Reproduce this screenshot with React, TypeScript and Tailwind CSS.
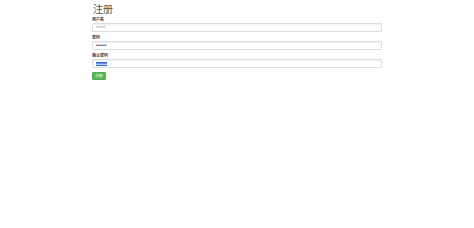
export default function App() {
  return (
    <div className="w-[474px] h-[228px] bg-white" style={{ fontFamily: '"Liberation Sans", "Noto Sans CJK SC", sans-serif' }}>
      <div className="ml-[92px] w-[290px] pt-[5px] flex flex-col">
        <h1 className="text-[10px] leading-[10px] h-[12px] text-[#555] font-normal pl-[1px]">注册</h1>
        <label className="text-[4px] leading-[5px] font-bold text-[#444]">用户名</label>
        <div className="mt-[1px] h-[9px] border border-[#ddd] shadow-[inset_0_1px_1px_rgba(0,0,0,0.06)] rounded-[1px] px-[3px] flex items-center text-[3.5px] text-[#999]">test01</div>
        <label className="mt-[3px] text-[4px] leading-[5px] font-bold text-[#444]">密码</label>
        <div className="mt-[1px] h-[9px] border border-[#ddd] shadow-[inset_0_1px_1px_rgba(0,0,0,0.06)] rounded-[1px] px-[3px] flex items-center text-[5px] text-[#444]">••••••</div>
        <label className="mt-[3px] text-[4px] leading-[5px] font-bold text-[#444]">确认密码<span className="font-normal text-[#f0ad4e] ml-[1px]">*</span></label>
        <div className="mt-[1px] h-[9px] border border-[#ddd] shadow-[inset_0_1px_1px_rgba(0,0,0,0.06)] rounded-[1px] px-[3px] flex items-center text-[5px] text-[#444]">
          <span className="bg-[#3367d6] text-white leading-[4px]">••••••</span>
        </div>
        <button className="mt-[4px] w-[14px] h-[8px] bg-[#5cb85c] border border-[#4cae4c] rounded-[1px] text-white text-[3.5px] leading-[4px] flex items-center justify-center">注册</button>
      </div>
    </div>
  );
}
